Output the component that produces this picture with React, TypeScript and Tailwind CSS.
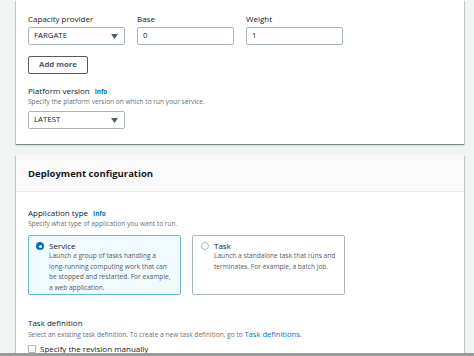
import React from "react";

const font = { fontFamily: '"Open Sans", "Noto Sans", sans-serif' };

function Caret() {
  return (
    <svg width="7" height="5" viewBox="0 0 7 5" className="shrink-0">
      <path d="M0 0 L7 0 L3.5 5 Z" fill="#545b64" />
    </svg>
  );
}

function Select({ value }: { value: string }) {
  return (
    <div className="w-[97px] h-[18px] border border-[#aab7b8] rounded-[2px] bg-white flex items-center justify-between pl-[5px] pr-[6px]">
      <span className="text-[7.8px] text-[#16191f]">{value}</span>
      <Caret />
    </div>
  );
}

function Input({ value }: { value: string }) {
  return (
    <div className="w-[97px] h-[18px] border border-[#aab7b8] rounded-[2px] bg-white flex items-center pl-[5px]">
      <span className="text-[7.8px] text-[#16191f]">{value}</span>
    </div>
  );
}

function Field({ label, children }: { label: string; children: React.ReactNode }) {
  return (
    <div className="flex flex-col gap-[3px]">
      <div className="text-[8px] leading-[10px] text-[#16191f]">{label}</div>
      {children}
    </div>
  );
}

function Label({ text, info }: { text: string; info?: boolean }) {
  return (
    <div className="flex items-baseline gap-[5px] leading-[10px]">
      <span className="text-[8px] text-[#16191f] font-medium">{text}</span>
      {info && <span className="text-[6.3px] font-bold text-[#0073bb]">Info</span>}
    </div>
  );
}

function Desc({ children }: { children: React.ReactNode }) {
  return <div className="text-[6.6px] leading-[10px] text-[#687078]">{children}</div>;
}

export default function App() {
  return (
    <div style={font} className="relative w-[474px] h-[356px] overflow-hidden bg-[#f2f3f3] pl-4 pr-[10px]">
      <div className="bg-white shadow-[0_1px_1px_0_rgba(0,28,36,0.3),1px_1px_1px_0_rgba(0,28,36,0.15),-1px_1px_1px_0_rgba(0,28,36,0.15)] px-3 pt-[14px] pb-[15px]">
        <div className="flex gap-[12px]">
          <Field label="Capacity provider">
            <Select value="FARGATE" />
          </Field>
          <Field label="Base">
            <Input value="0" />
          </Field>
          <Field label="Weight">
            <Input value="1" />
          </Field>
        </div>
        <div className="mt-[11px] w-[60px] h-[18px] border border-[#545b64] rounded-[2px] flex items-center justify-center">
          <span className="text-[7.8px] font-bold text-[#545b64]">Add more</span>
        </div>
        <div className="mt-[12px]">
          <Label text="Platform version" info />
          <Desc>Specify the platform version on which to run your service.</Desc>
          <div className="mt-[4px]">
            <Select value="LATEST" />
          </div>
        </div>
      </div>

      <div className="mt-[11px] bg-white shadow-[0_1px_1px_0_rgba(0,28,36,0.3),1px_1px_1px_0_rgba(0,28,36,0.15),-1px_1px_1px_0_rgba(0,28,36,0.15)]">
        <div className="h-[37px] bg-[#fafafa] border-b border-[#eaeded] px-3 pt-[3px] flex items-center">
          <span className="text-[9.5px] font-bold text-[#16191f]">Deployment configuration</span>
        </div>
        <div className="px-3 pt-[16px] pb-4">
          <Label text="Application type" info />
          <Desc>Specify what type of application you want to run.</Desc>
          <div className="mt-[6px] flex gap-[11px]">
            <div className="w-[153px] h-[60px] border border-[#6cb4dc] bg-[#f1faff] rounded-[2px] pl-[7px] pt-[5px] flex gap-[5px]">
              <div className="mt-[1px] w-[8px] h-[8px] rounded-full bg-[#0073bb] flex items-center justify-center shrink-0">
                <div className="w-[3px] h-[3px] rounded-full bg-white" />
              </div>
              <div className="flex flex-col">
                <span className="text-[8px] leading-[10px] text-[#16191f]">Service</span>
                <span className="text-[6.6px] leading-[10.6px] text-[#545b64] w-[124px]">
                  Launch a group of tasks handling a long-running computing work that can be stopped and restarted. For example, a web application.
                </span>
              </div>
            </div>
            <div className="w-[153px] h-[60px] border border-[#aab7b8] bg-white rounded-[2px] pl-[8px] pt-[5px] flex gap-[5px]">
              <div className="mt-[1px] w-[8px] h-[8px] rounded-full border border-[#aab7b8] shrink-0" />
              <div className="flex flex-col">
                <span className="text-[8px] leading-[10px] text-[#16191f]">Task</span>
                <span className="text-[6.6px] leading-[10.6px] text-[#545b64] w-[124px]">
                  Launch a standalone task that runs and terminates. For example, a batch job.
                </span>
              </div>
            </div>
          </div>
          <div className="mt-[23px]">
            <Label text="Task definition" />
            <div className="text-[6.6px] leading-[11px] text-[#687078] mt-[1px]">
              Select an existing task definition. To create a new task definition, go to{" "}
              <span className="text-[7.6px] text-[#0073bb]">Task definitions.</span>
            </div>
            <div className="mt-[3px] flex items-center gap-[4px]">
              <div className="w-[8px] h-[8px] border border-[#aab7b8] rounded-[1px] bg-white" />
              <span className="text-[8px] text-[#16191f]">Specify the revision manually</span>
            </div>
          </div>
        </div>
      </div>
      <div className="absolute left-0 right-0 bottom-0 h-[3px] bg-[#9b9b9b]" />
    </div>
  );
}
